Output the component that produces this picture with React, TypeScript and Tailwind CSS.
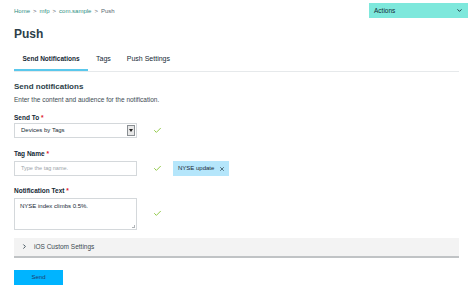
import { ChevronDown, ChevronRight, Check, X } from 'lucide-react';

const Req = () => <span className="text-[#e0182d]"> *</span>;

const Tick = () => <Check className="h-[9px] w-[9px] text-[#8cc63f]" strokeWidth={2.5} />;

export default function App() {
  return (
    <div className="h-[292px] w-[474px] bg-white font-['Liberation_Sans',Arial,sans-serif] text-[#152935]">
      {/* header */}
      <div className="flex items-start justify-between pl-[14px] pr-[6px] pt-[3px]">
        <div className="pt-[4px] text-[6px] text-[#3d70b2]">
          <span className="text-[#2f8f7f]">Home</span>
          <span className="mx-[3px] text-[#5a6872]">&gt;</span>
          <span className="text-[#2f8f7f]">mfp</span>
          <span className="mx-[3px] text-[#5a6872]">&gt;</span>
          <span className="text-[#2f8f7f]">com.sample</span>
          <span className="mx-[3px] text-[#5a6872]">&gt;</span>
          <span className="text-[#5a6872]">Push</span>
        </div>
        <div className="flex h-[15px] w-[99px] items-center justify-between bg-[#7ee8dc] pl-[5px] pr-[5px] text-[6.5px] text-[#152935]">
          <span>Actions</span>
          <ChevronDown className="h-[7px] w-[7px]" strokeWidth={3} />
        </div>
      </div>

      <div className="pl-[14px] pr-[15px]">
        <h1 className="mt-[10px] text-[12px] font-bold leading-none text-[#2d3f4a]">Push</h1>

        {/* tabs */}
        <div className="mt-[14px] flex border-b border-[#e6e9eb] text-[6.5px]">
          <div className="w-[74px] border-b-[2px] border-[#5ac8ec] pb-[5px] text-center font-bold text-[#152935]">
            Send Notifications
          </div>
          <div className="ml-[8px] pb-[5px] text-[7px] text-[#152935]">Tags</div>
          <div className="ml-[16px] pb-[5px] text-[7px] text-[#152935]">Push Settings</div>
        </div>

        <div className="mt-[9px] text-[8px] font-bold text-[#2d3f4a]">Send notifications</div>
        <div className="mt-[2px] text-[6.5px] text-[#3d4a52]">Enter the content and audience for the notification.</div>

        {/* send to */}
        <div className="mt-[8px] text-[6.5px] font-bold">
          Send To<Req />
        </div>
        <div className="mt-[1px] flex items-center">
          <div className="flex h-[15px] w-[123px] items-center justify-between border border-[#d4d8db] bg-white pl-[6px] pr-[1px] text-[6px]">
            <span>Devices by Tags</span>
            <div className="flex h-[11px] w-[8px] items-center justify-center border border-[#8a8f93] bg-[#e8e8e8]">
              <div className="h-0 w-0 border-x-[2px] border-t-[3px] border-x-transparent border-t-[#222]" />
            </div>
          </div>
          <div className="ml-[16px]"><Tick /></div>
        </div>

        {/* tag name */}
        <div className="mt-[11px] text-[6.5px] font-bold">
          Tag Name <Req />
        </div>
        <div className="mt-[2px] flex items-center">
          <div className="flex h-[15px] w-[123px] items-center border border-[#d4d8db] bg-white pl-[6px] text-[5.5px] text-[#9ba3a8]">
            Type the tag name.
          </div>
          <div className="ml-[16px]"><Tick /></div>
          <div className="ml-[11px] flex h-[15px] w-[56px] items-center gap-[5px] whitespace-nowrap bg-[#b5e6fb] pl-[5px] text-[6px] text-[#152935]">
            <span>NYSE update</span>
            <X className="h-[6px] w-[6px] shrink-0" strokeWidth={2.5} />
          </div>
        </div>

        {/* notification text */}
        <div className="mt-[10px] text-[6.5px] font-bold">
          Notification Text<Req />
        </div>
        <div className="mt-[2px] flex items-center">
          <div className="relative h-[32px] w-[123px] border border-[#d4d8db] bg-white pl-[5px] pt-[3px] text-[6px]">
            NYSE index climbs 0.5%.
            <div className="absolute bottom-[1px] right-[1px] h-[3px] w-[3px] border-b border-r border-[#b0b4b8]" />
          </div>
          <div className="ml-[16px]"><Tick /></div>
        </div>

        {/* iOS settings */}
        <div className="mt-[8px] flex h-[20px] items-center border-b-[2px] border-[#c0c3c5] bg-[#f3f3f3] pl-[7px] text-[6.5px] text-[#3d4a52]">
          <ChevronRight className="h-[7px] w-[7px] text-[#2d3f4a]" strokeWidth={3} />
          <span className="ml-[6px]">iOS Custom Settings</span>
        </div>

        <div className="mt-[12px] flex h-[15px] w-[49px] items-center justify-center bg-[#00b4ff] text-[6px] text-[#1f3a6e]">
          Send
        </div>
      </div>
    </div>
  );
}
